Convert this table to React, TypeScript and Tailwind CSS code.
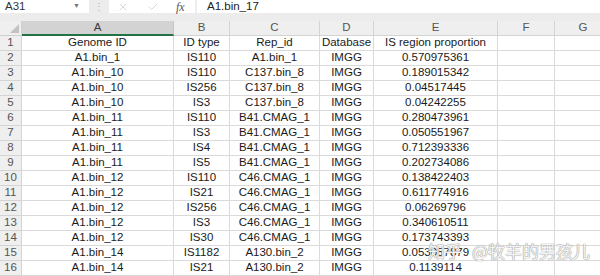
import React from 'react';
import { X, Check } from 'lucide-react';

const cols = ['A', 'B', 'C', 'D', 'E', 'F', 'G'];

const rows: string[][] = [
  ['Genome ID', 'ID type', 'Rep_id', 'Database', 'IS region proportion'],
  ['A1.bin_1', 'IS110', 'A1.bin_1', 'IMGG', '0.570975361'],
  ['A1.bin_10', 'IS110', 'C137.bin_8', 'IMGG', '0.189015342'],
  ['A1.bin_10', 'IS256', 'C137.bin_8', 'IMGG', '0.04517445'],
  ['A1.bin_10', 'IS3', 'C137.bin_8', 'IMGG', '0.04242255'],
  ['A1.bin_11', 'IS110', 'B41.CMAG_1', 'IMGG', '0.280473961'],
  ['A1.bin_11', 'IS3', 'B41.CMAG_1', 'IMGG', '0.050551967'],
  ['A1.bin_11', 'IS4', 'B41.CMAG_1', 'IMGG', '0.712393336'],
  ['A1.bin_11', 'IS5', 'B41.CMAG_1', 'IMGG', '0.202734086'],
  ['A1.bin_12', 'IS110', 'C46.CMAG_1', 'IMGG', '0.138422403'],
  ['A1.bin_12', 'IS21', 'C46.CMAG_1', 'IMGG', '0.611774916'],
  ['A1.bin_12', 'IS256', 'C46.CMAG_1', 'IMGG', '0.06269796'],
  ['A1.bin_12', 'IS3', 'C46.CMAG_1', 'IMGG', '0.340610511'],
  ['A1.bin_12', 'IS30', 'C46.CMAG_1', 'IMGG', '0.173743393'],
  ['A1.bin_14', 'IS1182', 'A130.bin_2', 'IMGG', '0.053057879'],
  ['A1.bin_14', 'IS21', 'A130.bin_2', 'IMGG', '0.1139114'],
];

const FormulaBar: React.FC = () => (
  <div className="flex h-[21px] bg-[#ececec]">
    <div className="flex h-[13px] w-[89px] items-center justify-between bg-white pl-[5px] pr-[9px] text-[11.5px] text-[#333]">
      <span>A31</span>
      <span className="text-[7px] text-[#777]">▼</span>
    </div>
    <div className="flex h-[13px] w-[20px] items-center justify-center text-[10px] text-[#b5b5b5]">⋮</div>
    <div className="flex h-[13px] w-[86px] items-center bg-white pl-[8px] text-[#bdbdbd]">
      <X className="h-[12px] w-[12px]" strokeWidth={1.2} />
      <Check className="ml-[18px] h-[12px] w-[12px]" strokeWidth={1.2} />
      <span className="ml-[17px] font-['Liberation_Serif',serif] text-[12px] italic text-[#555]">fx</span>
    </div>
    <div className="ml-[2px] flex h-[13px] flex-1 items-center bg-white pl-[10px] text-[11.5px] text-[#222]">
      A1.bin_17
    </div>
  </div>
);

export default function App() {
  return (
    <div className="relative h-[276px] w-[600px] overflow-hidden bg-white font-['Liberation_Sans',Arial,sans-serif]">
      <FormulaBar />
      <div className="grid grid-cols-[22px_152px_56px_90px_54px_124px_57px_57px] auto-rows-[15px] text-[11.5px] leading-none">
        <div className="relative border-b border-r border-[#cfcfcf] bg-[#efefef]">
          <svg className="absolute bottom-[2px] right-[2px]" width="9" height="9" viewBox="0 0 9 9">
            <polygon points="9,0 9,9 0,9" fill="#c2c2c2" />
          </svg>
        </div>
        {cols.map((c) => (
          <div
            key={c}
            className={
              c === 'A'
                ? 'flex items-center justify-center border-b-2 border-r border-b-[#217346] border-r-[#c6c6c6] bg-[#d3d3d3] pt-[1px] text-[#3a3a3a]'
                : 'flex items-center justify-center border-b border-r border-[#d4d4d4] bg-[#efefef] text-[#555]'
            }
          >
            {c}
          </div>
        ))}
        {rows.map((r, i) => (
          <React.Fragment key={i}>
            <div className="flex items-center justify-center border-b border-r border-[#d4d4d4] bg-[#efefef] text-[#555]">
              {i + 1}
            </div>
            {[...r, '', ''].map((v, j) => (
              <div
                key={j}
                className="flex items-center justify-center overflow-hidden whitespace-nowrap border-b border-r border-[#dadada] text-[#1a1a1a]"
              >
                {v}
              </div>
            ))}
          </React.Fragment>
        ))}
      </div>
      {/* watermark over the sheet */}
      <div className="absolute left-[428px] top-[242px] flex gap-[10px] font-['Noto_Sans_CJK_SC',sans-serif] text-[17px] leading-none text-[#f4f4f4] [text-shadow:0_0_1px_#8f8f8f,0_0_1px_#8f8f8f]">
        <span>知乎</span>
        <span>@牧羊的男孩儿</span>
      </div>
    </div>
  );
}
